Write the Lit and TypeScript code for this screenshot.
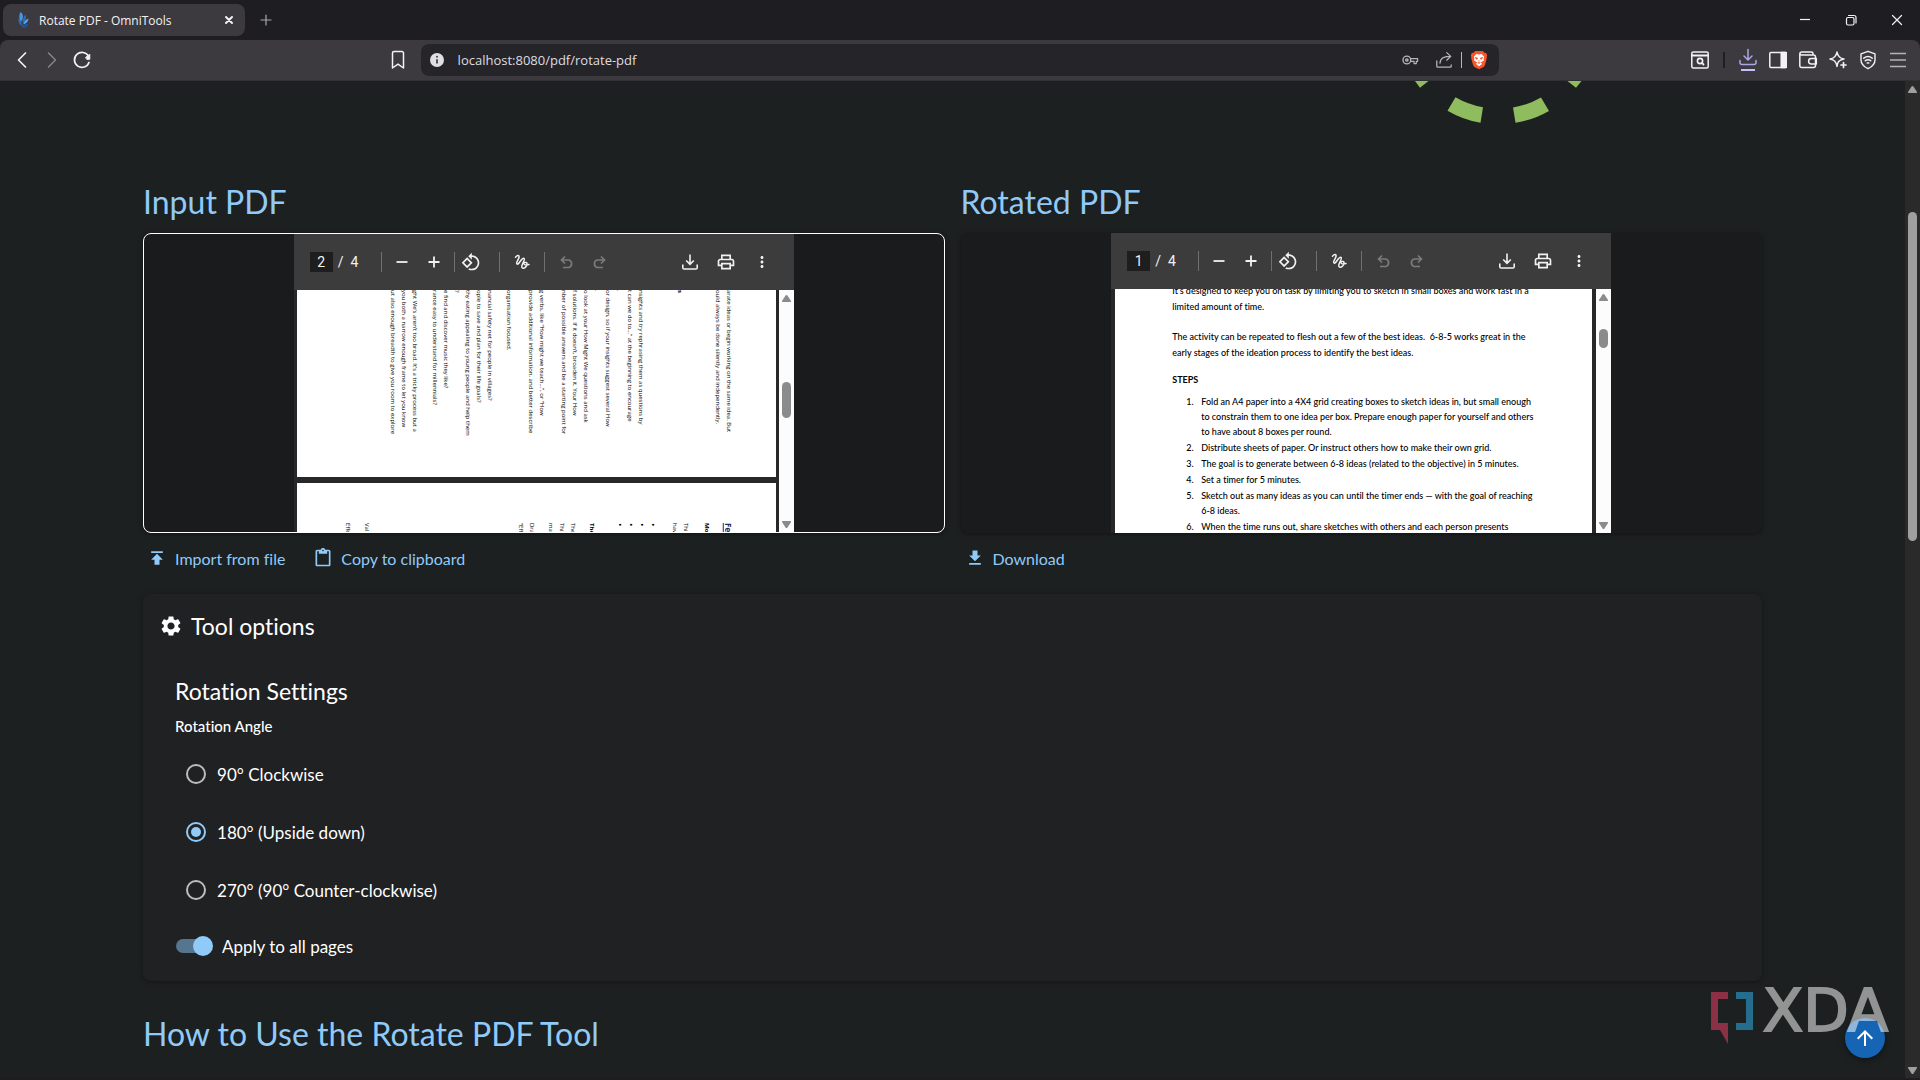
import { LitElement, html, svg, css, type TemplateResult } from "lit";
import { customElement, property, state } from "lit/decorators.js";

/* ---------- icons ---------- */

const line = (body: TemplateResult, size = 20) => html`<svg
  class="ico"
  width=${size}
  height=${size}
  viewBox="0 0 20 20"
  fill="none"
  stroke="currentColor"
  stroke-width="1.5"
  stroke-linecap="round"
  stroke-linejoin="round"
  aria-hidden="true"
>
  ${body}
</svg>`;

const solid = (d: string, size = 20) => html`<svg
  class="ico"
  width=${size}
  height=${size}
  viewBox="0 0 24 24"
  fill="currentColor"
  aria-hidden="true"
>
  <path d=${d}></path>
</svg>`;

const icons = {
  favicon: html`<svg class="ico" width="16" height="18" viewBox="0 0 16 18" aria-hidden="true">
    <path d="M4.500 1C7.500 2.800 7.800 6.500 5.300 10.500L4.600 11C3 7.500 2.800 4 4.500 1Z" fill="#4e93de"></path>
    <path d="M2.500 7C4.500 9 5.800 11.500 6 15C3.500 13.500 2 11 2.500 7Z" fill="#2a6fbf"></path>
    <path d="M9.800 3.500C10.500 6.500 9.500 9.500 6.600 12.500C6.300 9 7.300 5.800 9.800 3.500Z" fill="#2d72c0"></path>
    <path d="M12.500 7.500C12.300 10.500 10.500 12.500 7.200 13.600C7.800 10.500 9.500 8.500 12.500 7.500Z" fill="#5fa3ea"></path>
    <path d="M6 14C8.500 13 11 13.200 12.800 12.600C12.500 15.500 10.500 17.300 7 16.800C5.500 16.500 5.200 15 6 14Z" fill="#22528c"></path>
  </svg>`,
  tabClose: line(svg`<path d="M7 7l6 6M13 7l-6 6" stroke-width="2"/>`),
  plus: line(svg`<path d="M10 5v10M5 10h10" stroke-width="1.200"/>`),
  minimize: line(svg`<path d="M5 9.500h10" stroke-width="1.200" stroke-linecap="butt"/>`),
  restore: line(svg`<rect x="5.500" y="7.500" width="7.500" height="7.500" rx="1.500" stroke-width="1.200"/><path d="M7.500 5.500h5.500a2 2 0 0 1 2 2v5.500" stroke-width="1.200"/>`),
  close: line(svg`<path d="M5.500 5.500l9 9M14.500 5.500l-9 9" stroke-width="1.200"/>`),
  back: line(svg`<path d="M13.500 3l-7 7 7 7" stroke-width="1.700"/>`),
  forward: line(svg`<path d="M6.500 3l7 7-7 7"/>`),
  reload: line(svg`<path d="M17 12.500A7.500 7.500 0 1 1 16.500 6.200" stroke-width="1.700"/><path d="M13.800 7.300L17.800 4.300V9.200L15.200 9.400Z" fill="currentColor" stroke-width="1"/>`),
  bookmark: line(svg`<path d="M4.500 3a1.500 1.500 0 0 1 1.500-1.500h8a1.500 1.500 0 0 1 1.500 1.500V18L10 14.200 4.500 18Z"/>`),
  info: html`<svg class="ico" width="16" height="16" viewBox="0 0 16 16" aria-hidden="true">
    <circle cx="8" cy="8" r="7" fill="#e0dfe4"></circle>
    <circle cx="8" cy="4.800" r="1" fill="#47454c"></circle>
    <path d="M8 7.200v4.300" stroke="#47454c" stroke-width="1.800"></path>
  </svg>`,
  key: line(svg`<circle cx="6.500" cy="10" r="4.300"/><circle cx="6.500" cy="10" r="1.300"/><path d="M10.600 8.500H18.500V11.500H17V14H14.500V11.500H10.600" stroke-width="1.300"/>`, 18),
  share: line(svg`<path d="M2 11v6a1 1 0 0 0 1 1h14a1 1 0 0 0 1-1V15.500M5.500 13.500c.3-5 4-7.500 10.500-7.500M13 1.800l4.500 4.200-4.500 4.200" stroke-width="1.400"/>`, 18),
  brave: html`<svg class="ico" width="18" height="20" viewBox="0 0 18 20" aria-hidden="true">
    <path d="M5.200 1h7.600l1.600 1.700 1.800.2 1 2.400-.5 1.400.2 1-2 7.600-1.300 1.700L9 19.300 4.400 17l-1.300-1.700-2-7.600.2-1L.8 5.300l1-2.400 1.800-.2z" fill="#fb542b"></path>
    <path d="M9 4.500l2.600-.4 2.600 2.700-.6 2.300.5 1.200-3.200 2.200 1.200 1.500L9 16.300 5.900 14l1.200-1.500-3.200-2.200.5-1.200-.6-2.300 2.600-2.700z" fill="#fff"></path>
    <path d="M5.200 7.600l2.500.4-.9 1.500zM12.800 7.600l-2.500.4.900 1.500zM9 10v1.800M7.500 12.500L9 13.500l1.500-1" fill="#fb542b" stroke="#fb542b" stroke-width=".7"></path>
  </svg>`,
  searchWindow: line(svg`<rect x="1.800" y="2" width="16.400" height="16" rx="1.500"/><path d="M2 5.500h16" stroke-width="1.800"/><circle cx="10" cy="11" r="2.600" stroke-width="1.600"/><path d="M12 13l1.500 1.500" stroke-width="1.800"/>`),
  download: line(svg`<path d="M10 1.500v10M6 8l4 4 4-4M2 12.500v2a2 2 0 0 0 2 2h12a2 2 0 0 0 2-2v-2"/>`),
  sidebar: line(svg`<rect x="1.800" y="2.500" width="16.400" height="15" rx="1"/><path d="M13.200 2.500h5v15h-5z" fill="currentColor"/>`),
  wallet: line(svg`<path d="M15 5V3.500A1.500 1.500 0 0 0 13.500 2H3.500A1.800 1.800 0 0 0 1.800 3.800V15.500a2 2 0 0 0 2 2H15.500a2 2 0 0 0 2-2V7a2 2 0 0 0-2-2H3.500A1.600 1.600 0 0 1 1.900 3.600"/><path d="M18.300 8.500h-5a2.700 2.700 0 0 0 0 5.400h5z"/>`),
  sparkle: line(svg`<path d="M9 2c.7 4.500 2.500 6.300 7 7-2.800.5-4.500 1.300-5.600 2.800C9.600 13 9.200 14.500 9 16.500 8.300 11.500 6.500 9.700 2 9c4.500-.7 6.300-2.500 7-7z"/><path d="M15.500 12.500v5M13 15h5" stroke-width="1.700"/>`),
  shield: line(svg`<path d="M10 1.300l7 2.500v6c0 4-2.800 7-7 8.900-4.200-1.900-7-4.900-7-8.900v-6z" stroke-width="1.400"/><path d="M5.800 8.200c2.600-2 5.800-2 8.400 0M7.300 10.700c1.700-1.300 3.700-1.300 5.400 0M9.200 13c.5-.4 1.100-.4 1.600 0"/>`),
  menu: line(svg`<path d="M2 3.500h16M2 10h16M2 16.500h16" stroke-width="1.700" stroke-linecap="butt"/>`),
  minus: line(svg`<path d="M4.500 10h11" stroke-width="1.800" stroke-linecap="butt"/>`),
  zoomPlus: line(svg`<path d="M4.500 10h11M10 4.500v11" stroke-width="1.800" stroke-linecap="butt"/>`),
  rotate: solid("M7.340 6.410L.860 12.900l6.490 6.480 6.490-6.480-6.500-6.490zM3.690 12.900l3.660-3.660L11 12.900l-3.660 3.660-3.650-3.660zm15.670-6.260C17.610 4.880 15.300 4 13 4V.760L8.760 5 13 9.240V6c1.790 0 3.580.680 4.950 2.050 2.730 2.730 2.730 7.170 0 9.900C16.580 19.320 14.790 20 13 20c-.970 0-1.940-.210-2.840-.610l-1.490 1.490C10.020 21.620 11.510 22 13 22c2.300 0 4.610-.880 6.360-2.640 3.520-3.510 3.520-9.210 0-12.720z"),
  ink: line(svg`<path d="M3.500 5.200C5.500 3 7.500 3 7 5.500C6.500 8 3.500 10.500 5 12C6.800 13.500 9.500 5 12 6.300C14 7.500 8.500 13 10 15.500C11.500 17.500 15.500 14.500 15 11.500C14.500 9.500 11.500 10.500 12 12C12.500 13.200 15 13 17 12.500" stroke-width="1.500"/>`),
  undo: line(svg`<path d="M8 4.500L4.500 8 8 11.500M4.800 8H12a4 4 0 0 1 0 7.500H6" stroke-width="1.700" stroke-linecap="butt" stroke-linejoin="miter"/>`),
  redo: line(svg`<path d="M12 4.500L15.500 8 12 11.500M15.200 8H8a4 4 0 0 0 0 7.500H14" stroke-width="1.700" stroke-linecap="butt" stroke-linejoin="miter"/>`),
  save: line(svg`<path d="M10 2.500v9.500M6.200 8.500L10 12.300l3.800-3.800M2.800 12.500v3.200a1.300 1.300 0 0 0 1.300 1.300h11.800a1.300 1.300 0 0 0 1.300-1.300v-3.200" stroke-width="1.600" stroke-linecap="butt" stroke-linejoin="miter"/>`),
  print: solid("M19 8h-1V3H6v5H5c-1.660 0-3 1.340-3 3v6h4v4h12v-4h4v-6c0-1.660-1.340-3-3-3zM8 5h8v3H8V5zm8 12v2H8v-4h8v2zm2-2v-2H6v2H4v-4c0-.550.450-1 1-1h14c.550 0 1 .450 1 1v4h-2z"),
  more: solid("M12 8c1.100 0 2-.900 2-2s-.900-2-2-2-2 .900-2 2 .900 2 2 2zm0 2c-1.100 0-2 .900-2 2s.900 2 2 2 2-.900 2-2-.900-2-2-2zm0 6c-1.100 0-2 .900-2 2s.900 2 2 2 2-.900 2-2-.900-2-2-2z", 18),
  publish: solid("M5 4v2h14V4H5zm0 10h4v6h6v-6h4l-7-7-7 7z"),
  paste: solid("M19 2h-4.180C14.400.840 13.300 0 12 0c-1.300 0-2.400.840-2.820 2H5c-1.100 0-2 .900-2 2v16c0 1.100.900 2 2 2h14c1.100 0 2-.900 2-2V4c0-1.100-.900-2-2-2zm-7 0c.550 0 1 .450 1 1s-.450 1-1 1-1-.450-1-1 .450-1 1-1zm7 18H5V4h2v3h10V4h2v16z"),
  getApp: solid("M5 20h14v-2H5v2zM19 9h-4V3H9v6H5l7 7 7-7z"),
  gear: solid("M19.140 12.940c.040-.300.060-.610.060-.940 0-.320-.020-.640-.070-.940l2.030-1.580c.180-.140.230-.410.120-.610l-1.920-3.320c-.120-.220-.370-.290-.590-.220l-2.390.960c-.500-.380-1.030-.700-1.620-.940l-.360-2.540c-.040-.240-.240-.410-.480-.410h-3.840c-.240 0-.430.170-.470.410l-.360 2.540c-.590.240-1.130.570-1.620.940l-2.390-.960c-.220-.080-.470 0-.590.220L2.740 8.870c-.120.210-.080.470.120.610l2.030 1.580c-.050.300-.090.630-.090.940s.020.640.070.940l-2.030 1.580c-.180.140-.230.410-.120.610l1.920 3.320c.120.220.370.290.590.220l2.390-.960c.500.380 1.030.700 1.620.940l.360 2.540c.050.240.240.410.480.410h3.840c.240 0 .440-.170.470-.410l.360-2.540c.590-.240 1.130-.560 1.620-.940l2.390.960c.220.080.470 0 .590-.220l1.920-3.320c.120-.220.070-.470-.120-.610l-2.010-1.580zM12 15.600c-1.980 0-3.600-1.620-3.600-3.600s1.620-3.600 3.600-3.600 3.600 1.620 3.600 3.600-1.620 3.600-3.600 3.600z", 24),
  arrowUp: solid("M4 12l1.410 1.410L11 7.830V20h2V7.830l5.580 5.590L20 12l-8-8-8 8z", 24),
};

const reset = css`
  *,
  *::before,
  *::after {
    box-sizing: border-box;
  }
  button,
  input {
    font: inherit;
    color: inherit;
    background: none;
    border: 0;
    margin: 0;
    padding: 0;
  }
  button {
    display: inline-flex;
    align-items: center;
    justify-content: center;
    cursor: pointer;
  }
  .ico {
    display: block;
    flex: none;
  }
`;

/* ---------- scroll bar ---------- */

@customElement("scroll-rail")
export class ScrollRail extends LitElement {
  @property({ type: Number }) before = 1;
  @property({ type: Number }) thumb = 1;
  @property({ type: Number }) after = 1;

  static styles = css`
    :host {
      display: flex;
      flex-direction: column;
      align-items: center;
      flex: none;
      width: 15px;
      background: var(--rail, #2b2a2a);
      color: var(--knob, #9f9f9f);
    }
    .cap {
      display: block;
      flex: none;
    }
    .thumb {
      width: 9px;
      border-radius: 5px;
      background: currentColor;
    }
  `;

  render() {
    return html`
      <svg class="cap" width="11" height="17" viewBox="0 0 11 17" fill="currentColor" aria-hidden="true">
        <path d="M4.500 5.500Q5.500 4.500 6.500 5.500L10 11Q10.200 12 9.500 12H1.500Q.8 12 1 11Z"></path>
      </svg>
      <div style="flex:${this.before} 1 0"></div>
      <div class="thumb" style="flex:${this.thumb} 1 0"></div>
      <div style="flex:${this.after} 1 0"></div>
      <svg class="cap" width="11" height="17" viewBox="0 0 11 17" fill="currentColor" aria-hidden="true">
        <path d="M4.500 12.500Q5.500 13.500 6.500 12.500L10 7Q10.200 6 9.500 6H1.500Q.8 6 1 7Z"></path>
      </svg>
    `;
  }
}

/* ---------- browser frame ---------- */

@customElement("browser-bar")
export class BrowserBar extends LitElement {
  static styles = [
    reset,
    css`
      :host {
        display: block;
        background: #1e1d22;
        color: #f2f1f4;
        font-family: "Open Sans", "Noto Sans", sans-serif;
        font-size: 12px;
      }
      .tabs {
        display: flex;
        align-items: center;
        height: 40px;
        padding-left: 3px;
      }
      .tab {
        display: flex;
        align-items: center;
        width: 242px;
        height: 32px;
        padding: 0 6px 0 13px;
        border-radius: 8px;
        background: #3c3a3f;
      }
      .title {
        flex: 1;
        padding-left: 7px;
        white-space: nowrap;
      }
      .new {
        width: 42px;
        height: 32px;
        color: #a9a7ae;
      }
      .window {
        display: flex;
        margin-left: auto;
      }
      .window button {
        width: 46px;
        height: 40px;
      }
      .bar {
        display: flex;
        align-items: center;
        height: 41px;
        padding: 0 7px 1px;
        border-bottom: 1px solid #313034;
        border-radius: 8px 8px 0 0;
        background: #3c3a3f;
      }
      .bar button {
        width: 30px;
        height: 30px;
      }
      .off {
        color: #85838a;
      }
      .left {
        flex: 20;
      }
      .right {
        flex: 13;
      }
      .address {
        display: flex;
        align-items: center;
        width: 56.600%;
        height: 32px;
        margin-left: 8px;
        padding: 0 3px 0 8px;
        border-radius: 8px;
        background: #252429;
        color: #b7b5bc;
      }
      .url {
        flex: 1;
        padding-left: 13px;
        font-size: 13px;
        color: #dddce0;
      }
      .address button.wide {
        width: 34px;
      }
      .split {
        width: 1px;
        height: 16px;
        background: #b7b5bc;
      }
      .gap {
        width: 2px;
        height: 16px;
        margin: 0 8px;
        background: #1f1e22;
      }
      .bar .loads {
        flex-direction: column;
        gap: 1px;
        height: 24px;
        color: #a9a6e8;
      }
      .loads::after {
        content: "";
        width: 14px;
        height: 2px;
        background: #c3c0ff;
      }
      .dim {
        color: #b4b3b8;
      }
    `,
  ];

  render() {
    return html`
      <div class="tabs">
        <div class="tab">
          ${icons.favicon}
          <span class="title">Rotate PDF - OmniTools</span>
          <button aria-label="Close tab">${icons.tabClose}</button>
        </div>
        <button class="new" aria-label="New tab">${icons.plus}</button>
        <div class="window">
          <button aria-label="Minimize">${icons.minimize}</button>
          <button aria-label="Restore">${icons.restore}</button>
          <button aria-label="Close">${icons.close}</button>
        </div>
      </div>
      <div class="bar">
        <button aria-label="Back">${icons.back}</button>
        <button class="off" aria-label="Forward">${icons.forward}</button>
        <button aria-label="Reload">${icons.reload}</button>
        <div class="left"></div>
        <button aria-label="Bookmark">${icons.bookmark}</button>
        <div class="address">
          ${icons.info}
          <input class="url" aria-label="Address" .value=${"localhost:8080/pdf/rotate-pdf"} />
          <button class="wide" aria-label="Passwords">${icons.key}</button>
          <button class="wide" aria-label="Share">${icons.share}</button>
          <span class="split"></span>
          <button class="wide" aria-label="Shields">${icons.brave}</button>
        </div>
        <div class="right"></div>
        <button aria-label="Search tabs">${icons.searchWindow}</button>
        <span class="gap"></span>
        <button class="loads" aria-label="Downloads">${icons.download}</button>
        <button aria-label="Sidebar">${icons.sidebar}</button>
        <button aria-label="Wallet">${icons.wallet}</button>
        <button aria-label="Assistant">${icons.sparkle}</button>
        <button aria-label="VPN">${icons.shield}</button>
        <button class="dim" aria-label="Menu">${icons.menu}</button>
      </div>
    `;
  }
}

/* ---------- PDF viewer ---------- */

@customElement("pdf-viewer")
export class PdfViewer extends LitElement {
  @property({ type: Number }) page = 1;
  @property({ type: Number }) total = 4;
  @property({ attribute: false }) rail: number[] = [1, 1, 1];

  static styles = [
    reset,
    css`
      :host {
        display: flex;
        flex-direction: column;
        width: 500px;
        height: 100%;
        background: #282828;
        color: #f1f1f1;
        font-family: Roboto, sans-serif;
        font-size: 14px;
      }
      .tools {
        display: flex;
        align-items: center;
        flex: none;
        height: 56px;
        padding: 0 16px;
        background: #3c3c3c;
      }
      .num {
        width: 23px;
        height: 20px;
        background: #1e1e1e;
        text-align: center;
      }
      .count {
        display: flex;
        gap: 7px;
        width: 48px;
        padding-left: 5px;
      }
      .rule {
        width: 1px;
        height: 20px;
        background: #6f6f6f;
      }
      .tools button {
        width: 32px;
        height: 32px;
      }
      .zoom {
        display: flex;
        padding: 0 4px;
      }
      .tools .turn {
        width: 44px;
        padding-right: 12px;
      }
      .tools .draw {
        width: 44px;
      }
      .history {
        display: flex;
        padding-left: 6px;
        color: #7b7b7b;
      }
      .end {
        display: flex;
        gap: 4px;
        margin-left: auto;
      }
      .body {
        display: flex;
        flex: 1;
        min-height: 0;
      }
      .sheets {
        flex: 1;
        min-width: 0;
        padding: 0 3px;
        overflow: hidden;
      }
      scroll-rail {
        --rail: #fcfcfc;
        --knob: #8b8b8b;
      }
    `,
  ];

  render() {
    const [before, thumb, after] = this.rail;
    return html`
      <div class="tools">
        <input class="num" aria-label="Page number" .value=${String(this.page)} />
        <span class="count"><span>/</span><span>${this.total}</span></span>
        <span class="rule"></span>
        <span class="zoom">
          <button aria-label="Zoom out">${icons.minus}</button>
          <button aria-label="Zoom in">${icons.zoomPlus}</button>
        </span>
        <span class="rule"></span>
        <button class="turn" aria-label="Rotate">${icons.rotate}</button>
        <span class="rule"></span>
        <button class="draw" aria-label="Draw">${icons.ink}</button>
        <span class="rule"></span>
        <span class="history">
          <button aria-label="Undo">${icons.undo}</button>
          <button aria-label="Redo">${icons.redo}</button>
        </span>
        <span class="end">
          <button aria-label="Download">${icons.save}</button>
          <button aria-label="Print">${icons.print}</button>
          <button aria-label="More">${icons.more}</button>
        </span>
      </div>
      <div class="body">
        <div class="sheets"><slot></slot></div>
        <scroll-rail .before=${before} .thumb=${thumb} .after=${after}></scroll-rail>
      </div>
    `;
  }
}

/* ---------- page ---------- */

type Column = [text: string, gap?: number, kind?: string];

const sideways: Column[] = [
  ["arate ideas or begin working on the same idea. But"],
  ["ould always be done silently and independently."],
  ["s", 27, "strong"],
  ["nsights and try rephrasing them as questions by", 28],
  ["t can we do to…”  at the beginning to encourage"],
  ["."],
  ["or design, so if your insights suggest several How"],
  ["."],
  ["o look at your How Might We questions and ask"],
  ["f solutions. If it doesn’t, broaden it. Your How"],
  ["nber of possible answers and be a starting point for"],
  ["g verbs, like “How might we teach…”, or “How", 11],
  ["provide additional information, and better describe"],
  ["organisation focused.", 11],
  ["nancial safety net for people in villages?", 8],
  ["ople to save and plan for their life goals?"],
  ["thy eating appealing to young people and help them"],
  ["?"],
  ["e find and discover music they like?"],
  ["rance easy to understand for millennials?"],
  ["ght We’s aren’t too broad. It’s a tricky process but a", 9],
  ["you both a narrow enough frame to let you know"],
  ["ut also enough breadth to give you room to explore"],
];

const sidewaysNext: Column[] = [
  ["Fee", 0, "title"],
  ["Mo", 11, "strong"],
  ["Thi", 10],
  ["hav"],
  ["•", 10, "dot"],
  ["•", 0, "dot"],
  ["•", 0, "dot"],
  ["•", 0, "dot"],
  ["The", 18, "strong"],
  ["The", 8],
  ["This"],
  ["mat"],
  ["Dra", 8],
  ["“Eff"],
  ["Vali", 143],
  ["Effe", 8],
];

const steps: string[][] = [
  [
    "Fold an A4 paper into a 4X4 grid creating boxes to sketch ideas in, but small enough",
    "to constrain them to one idea per box. Prepare enough paper for yourself and others",
    "to have about 8 boxes per round.",
  ],
  ["Distribute sheets of paper. Or instruct others how to make their own grid."],
  ["The goal is to generate between 6-8 ideas (related to the objective) in 5 minutes."],
  ["Set a timer for 5 minutes."],
  ["Sketch out as many ideas as you can until the timer ends — with the goal of reaching", "6-8 ideas."],
  ["When the time runs out, share sketches with others and each person presents"],
];

const angles = [
  { value: "90", label: "90° Clockwise" },
  { value: "180", label: "180° (Upside down)" },
  { value: "270", label: "270° (90° Counter-clockwise)" },
];

@customElement("app-root")
export class AppRoot extends LitElement {
  @state() private angle = "180";
  @state() private everyPage = true;

  static styles = [
    reset,
    css`
      :host {
        display: flex;
        flex-direction: column;
        height: 100vh;
        overflow: hidden;
        background: #1c2020;
        color: #fff;
        font-family: Lato, "Open Sans", sans-serif;
        font-size: 17px;
        font-variant-ligatures: none;
      }
      .view {
        position: relative;
        display: flex;
        flex: 1;
        min-height: 0;
        border-bottom: 2px solid #1f1c20;
      }
      main {
        flex: 1;
        min-width: 0;
        padding: 0 7.450%;
        overflow: hidden;
      }
      .hero {
        display: flex;
        justify-content: flex-end;
        padding-right: 180px;
        margin-bottom: 58px;
      }
      h2 {
        margin: 0;
        font-size: 32px;
        line-height: 38px;
        font-weight: 400;
        color: #90caf9;
      }
      .pair {
        display: grid;
        grid-template-columns: 1fr 1fr;
        gap: 16px;
      }
      .frame {
        display: flex;
        justify-content: center;
        height: 300px;
        margin: 12px 0 7px;
        overflow: hidden;
        border-radius: 8px;
        background: #1a1b1d;
        box-shadow: 0 1px 5px rgba(0, 0, 0, 0.4);
      }
      .frame.lit {
        border: 1px solid #fff;
      }
      .actions {
        display: flex;
        gap: 20px;
      }
      .actions button {
        gap: 8px;
        height: 36px;
        padding: 0 4px;
        font-size: 16px;
        color: #90caf9;
      }
      .sheet {
        background: #fff;
        color: #222;
        overflow: hidden;
      }
      .turned {
        width: 100%;
        height: 187px;
        margin-bottom: 6px;
        padding-right: 42px;
        writing-mode: vertical-rl;
        font-family: "Open Sans", sans-serif;
        font-size: 6px;
        line-height: 11px;
        font-weight: 500;
        color: #000;
        white-space: nowrap;
      }
      .turned.next {
        padding-top: 40px;
      }
      .turned p {
        margin: 0;
      }
      .turned .strong {
        font-weight: 700;
      }
      .turned .dot {
        font-size: 9px;
      }
      .turned .title {
        font-weight: 700;
        font-size: 8px;
        color: #1c2f5c;
        text-decoration: underline;
      }
      .upright {
        height: 100%;
        margin: 0 1px;
        padding: 0 57px;
        font-family: Lato, sans-serif;
        font-size: 9px;
        line-height: 16px;
        font-weight: 500;
        color: #000;
        white-space: nowrap;
      }
      .upright p {
        margin: 0 0 14px;
      }
      .upright p:first-child {
        margin-top: -6px;
      }
      .upright h3 {
        margin: -3px 0 6px;
        font-size: 9px;
        line-height: 16px;
        font-weight: 700;
      }
      .upright ol {
        display: grid;
        gap: 1px;
        margin: 0;
        padding-left: 14px;
        list-style: none;
        line-height: 15px;
        counter-reset: step;
      }
      .upright li {
        display: grid;
        grid-template-columns: 15px 1fr;
        counter-increment: step;
      }
      .upright li::before {
        content: counter(step) ".";
      }
      .options {
        margin: 18px 0 34px;
        padding: 16px 16px 8px;
        border-radius: 8px;
        background: #202123;
        box-shadow: 0 1px 5px rgba(0, 0, 0, 0.35);
      }
      .head {
        display: flex;
        align-items: center;
        gap: 8px;
      }
      h3 {
        margin: 0;
        font-size: 23px;
        line-height: 32px;
        font-weight: 400;
      }
      .fields {
        padding: 33px 16px 0;
      }
      .caption {
        margin: 9px 0;
        font-size: 15px;
        line-height: 20px;
        font-weight: 500;
      }
      .choice {
        display: flex;
        align-items: center;
        gap: 11px;
        height: 58px;
        padding-left: 11px;
      }
      .choice input {
        appearance: none;
        display: grid;
        place-items: center;
        width: 20px;
        height: 20px;
        border: 2px solid #bdbdbe;
        border-radius: 50%;
      }
      .choice input:checked {
        border-color: #90caf9;
      }
      .choice input:checked::after {
        content: "";
        width: 10px;
        height: 10px;
        border-radius: 50%;
        background: #90caf9;
      }
      .toggle {
        display: flex;
        align-items: center;
        gap: 9px;
        height: 54px;
      }
      .toggle input {
        appearance: none;
        display: flex;
        align-items: center;
        width: 38px;
        height: 20px;
        padding-left: 1px;
      }
      .toggle input::before {
        content: "";
        width: 34px;
        height: 14px;
        border-radius: 7px;
        background: #777;
      }
      .toggle input::after {
        content: "";
        width: 20px;
        height: 20px;
        margin-left: -34px;
        border-radius: 50%;
        background: #ddd;
      }
      .toggle input:checked::before {
        background: #56758e;
      }
      .toggle input:checked::after {
        margin-left: -17px;
        background: #90caf9;
      }
      .top {
        position: absolute;
        right: 35px;
        bottom: 20px;
        width: 40px;
        height: 40px;
        border-radius: 50%;
        background: #1565b4;
        box-shadow: 0 2px 6px rgba(0, 0, 0, 0.4);
      }
      .mark {
        position: absolute;
        right: 32px;
        bottom: 34px;
        display: flex;
        gap: 9px;
        align-items: flex-start;
        opacity: 0.52;
        pointer-events: none;
        font-family: "DejaVu Sans", sans-serif;
        font-size: 59px;
        line-height: 38px;
        -webkit-text-stroke: 2px #fff;
      }
    `,
  ];

  private columns(list: Column[]) {
    return list.map(([text, gap = 0, kind = ""]) => html`<p class=${kind} style="margin-right:${gap}px">${text}</p>`);
  }

  private lines(list: string[]) {
    return list.map((text, i) => (i ? html`<br />${text}` : text));
  }

  render() {
    return html`
      <browser-bar></browser-bar>
      <div class="view">
        <main>
          <div class="hero">
            <svg width="167" height="44" viewBox="1415 81 167 44" fill="#8fbc5f" aria-hidden="true">
              <path d="M1415 81H1428.500L1420 87.800Z"></path>
              <path d="M1581.500 81H1567.500L1576 87.800Z"></path>
              <path d="M1455.500 97.300A83 83 0 0 0 1483 107.300L1480.500 122.800A98.600 98.600 0 0 1 1447.500 110.700Z"></path>
              <path d="M1541 97.500A83 83 0 0 1 1513 107.500L1515.500 122.800A98.600 98.600 0 0 0 1549 110.900Z"></path>
            </svg>
          </div>

          <div class="pair">
            <section>
              <h2>Input PDF</h2>
              <div class="frame lit">
                <pdf-viewer .page=${2} .rail=${[75, 36, 97]}>
                  <div class="sheet turned">${this.columns(sideways)}</div>
                  <div class="sheet turned next">${this.columns(sidewaysNext)}</div>
                </pdf-viewer>
              </div>
              <div class="actions">
                <button>${icons.publish}Import from file</button>
                <button>${icons.paste}Copy to clipboard</button>
              </div>
            </section>
            <section>
              <h2>Rotated PDF</h2>
              <div class="frame">
                <pdf-viewer .page=${1} .rail=${[23, 19, 168]}>
                  <article class="sheet upright">
                    <p>${this.lines([
                      "It’s designed to keep you on task by limiting you to sketch in small boxes and work fast in a",
                      "limited amount of time.",
                    ])}</p>
                    <p>${this.lines([
                      "The activity can be repeated to flesh out a few of the best ideas.\u00a0 6-8-5 works great in the",
                      "early stages of the ideation process to identify the best ideas.",
                    ])}</p>
                    <h3>STEPS</h3>
                    <ol>
                      ${steps.map((item) => html`<li><span>${this.lines(item)}</span></li>`)}
                    </ol>
                  </article>
                </pdf-viewer>
              </div>
              <div class="actions">
                <button>${icons.getApp}Download</button>
              </div>
            </section>
          </div>

          <section class="options">
            <div class="head">${icons.gear}<h3>Tool options</h3></div>
            <div class="fields" role="radiogroup" aria-labelledby="angle">
              <h3>Rotation Settings</h3>
              <p class="caption" id="angle">Rotation Angle</p>
              ${angles.map(
                (a) => html`<label class="choice">
                  <input
                    type="radio"
                    name="angle"
                    .value=${a.value}
                    .checked=${this.angle === a.value}
                    @change=${() => (this.angle = a.value)}
                  />
                  ${a.label}
                </label>`
              )}
              <label class="toggle">
                <input
                  type="checkbox"
                  role="switch"
                  .checked=${this.everyPage}
                  @change=${() => (this.everyPage = !this.everyPage)}
                />
                Apply to all pages
              </label>
            </div>
          </section>

          <h2>How to Use the Rotate PDF Tool</h2>
        </main>
        <scroll-rail .before=${114} .thumb=${329} .after=${520}></scroll-rail>
        <button class="top" aria-label="Back to top">${icons.arrowUp}</button>
        <div class="mark">
          <svg class="ico" width="43" height="52" viewBox="0 0 43 52" aria-hidden="true">
            <path d="M0 0H17V7H7V31H17V52L9 38H0Z" fill="#f24268"></path>
            <path d="M25 0H42V38H25V31H35V7H25Z" fill="#2eb5f0"></path>
          </svg>
          XDA
        </div>
      </div>
    `;
  }
}
